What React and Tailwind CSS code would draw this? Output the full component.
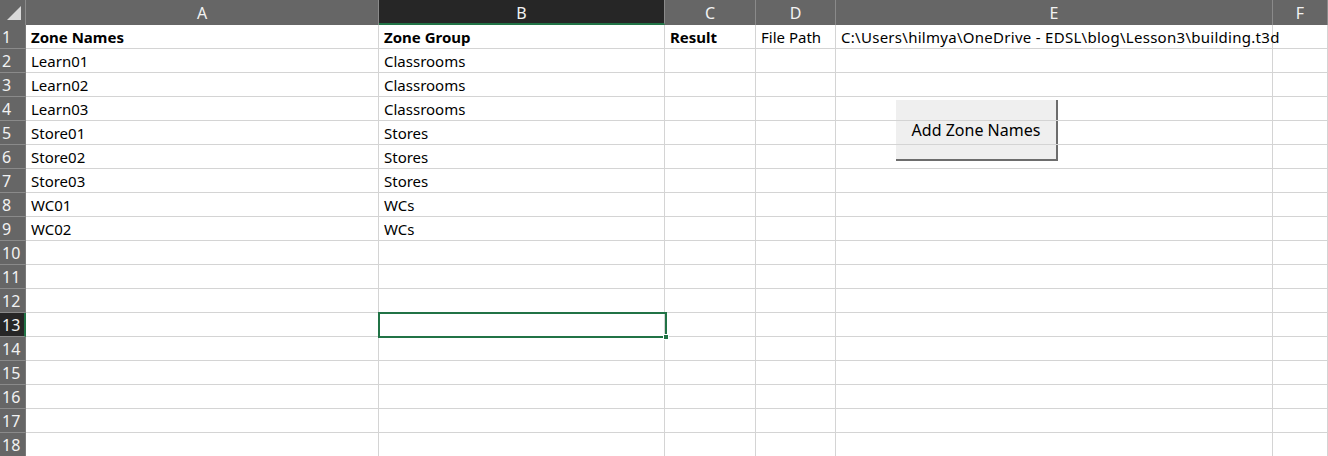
import React from 'react';

const COLS = ['A', 'B', 'C', 'D', 'E', 'F'];

const ROWS = [
  { a: 'Zone Names', b: 'Zone Group', c: 'Result', d: 'File Path', e: 'C:\\Users\\hilmya\\OneDrive - EDSL\\blog\\Lesson3\\building.t3d', bold: true },
  { a: 'Learn01', b: 'Classrooms' },
  { a: 'Learn02', b: 'Classrooms' },
  { a: 'Learn03', b: 'Classrooms' },
  { a: 'Store01', b: 'Stores' },
  { a: 'Store02', b: 'Stores' },
  { a: 'Store03', b: 'Stores' },
  { a: 'WC01', b: 'WCs' },
  { a: 'WC02', b: 'WCs' },
  {}, {}, {}, {}, {}, {}, {}, {}, {}
];

const font = { fontFamily: '"Noto Sans", "Open Sans", sans-serif' };

function Cell({ children, bold, className = '' }) {
  return (
    <div
      className={`h-[24px] border-b border-r border-[#d4d4d4] pl-[5px] pt-[1px] flex items-center whitespace-nowrap overflow-visible text-[15px] text-black ${bold ? 'font-bold' : ''} ${className}`}
    >
      {children}
    </div>
  );
}

export default function App() {
  return (
    <div className="relative w-[1328px] h-[456px] overflow-hidden bg-white" style={font}>
      <div className="grid grid-cols-[26px_353px_286px_91px_80px_437px_1fr]">
        {/* corner */}
        <div className="h-[25px] bg-[#666666] border-r border-[#8a8a8a] flex items-end justify-end pr-[4px] pb-[5px]">
          <div className="w-0 h-0 border-l-[14px] border-l-transparent border-b-[14px] border-b-[#d9d9d9]" />
        </div>
        {COLS.map(c => (
          <div
            key={c}
            className={`h-[25px] flex items-center justify-center border-r border-[#8a8a8a] text-[16px] text-[#f2f2f2] ${
              c === 'B' ? 'bg-[#262626] border-b-2 border-b-[#217346] pt-[2px]' : 'bg-[#666666]'
            }`}
          >
            {c}
          </div>
        ))}

        {ROWS.map((r, i) => {
          const n = i + 1;
          const sel = n === 13;
          return (
            <React.Fragment key={n}>
              <div
                className={`h-[24px] flex items-center pl-[2px] pt-[1px] text-[16px] text-[#f2f2f2] border-b border-[#8a8a8a] ${
                  sel ? 'bg-[#262626] border-r-2 border-r-[#217346]' : 'bg-[#666666] border-r border-r-[#7a7a7a]'
                }`}
              >
                {n}
              </div>
              <Cell bold={r.bold}>{r.a}</Cell>
              <Cell bold={r.bold}>{r.b}</Cell>
              <Cell bold={r.bold}>{r.c}</Cell>
              <Cell>{r.d}</Cell>
              <Cell className="relative z-10 tracking-[0.28px]">{r.e}</Cell>
              <Cell />
            </React.Fragment>
          );
        })}
      </div>

      {/* selected cell B13 */}
      <div className="absolute left-[378px] top-[312px] w-[289px] h-[26px] border-2 border-[#217346] pointer-events-none">
        <div className="absolute -right-[4px] -bottom-[4px] w-[6px] h-[6px] bg-[#217346] border border-white" />
      </div>

      {/* form button */}
      <button
        type="button"
        className="absolute left-[896px] top-[100px] w-[162px] h-[61px] bg-[#efefef] border-r-2 border-b-2 border-r-[#6d6d6d] border-b-[#6d6d6d] text-[16px] text-black"
        style={font}
      >
        Add Zone Names
      </button>
    </div>
  );
}
